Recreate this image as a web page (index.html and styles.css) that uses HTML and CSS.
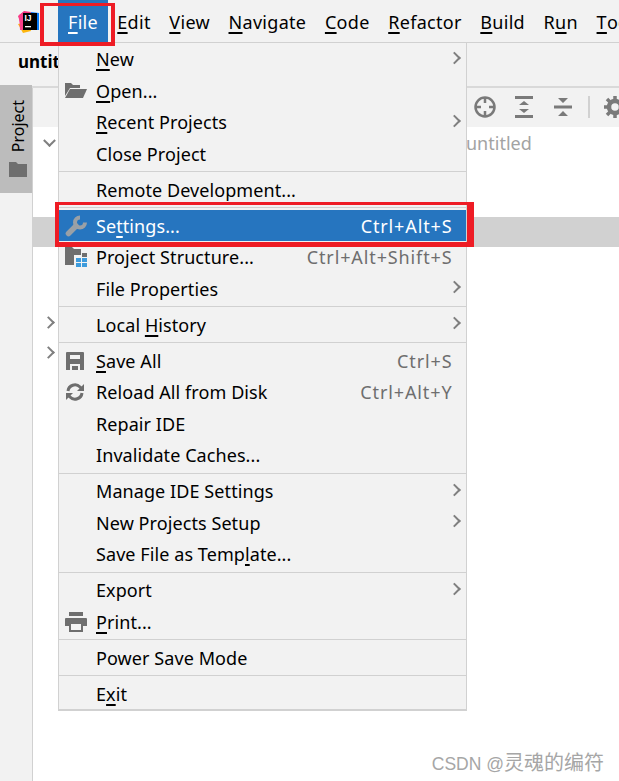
FILE: index.html
```html
<!DOCTYPE html>
<html lang="en">
<head>
<meta charset="utf-8">
<title>File menu</title>
<link rel="stylesheet" href="styles.css">
</head>
<body>
<div class="app">
  <header class="menubar">
    <svg class="logo" width="24" height="24" viewBox="0 0 24 24">
      <path d="M0 6 6 1 13 2 10 14 3 15Z" fill="#f5317f"/>
      <path d="M13 2 21 3 21 20 12 20Z" fill="#087cfa"/>
      <path d="M0 14 5 23 13 21 10 12Z" fill="#fdb60d"/>
      <path d="M1 5 5 3 5 20 2 20Z" fill="#fc3f8a"/>
      <rect x="5" y="3" width="14" height="17" fill="#000"/>
      <text x="6.500" y="11" class="logo-text">IJ</text>
      <rect x="7" y="16" width="6" height="1.300" fill="#fff"/>
    </svg>
    <nav class="menus">
      <span class="menu menu-active"><u>F</u>ile</span>
      <span class="menu"><u>E</u>dit</span>
      <span class="menu"><u>V</u>iew</span>
      <span class="menu"><u>N</u>avigate</span>
      <span class="menu"><u>C</u>ode</span>
      <span class="menu"><u>R</u>efactor</span>
      <span class="menu"><u>B</u>uild</span>
      <span class="menu">R<u>u</u>n</span>
      <span class="menu"><u>T</u>ools</span>
    </nav>
  </header>
  <div class="titlebar"><b>untitled</b></div>
  <div class="workspace">
    <aside class="sidebar">
      <div class="side-tab">
        <span class="side-label">Project</span>
        <svg width="18" height="15" viewBox="0 0 18 15"><path d="M0 0h7l2 2h9v13H0Z" fill="#6e6e6e"/></svg>
      </div>
    </aside>
    <main class="panel">
      <div class="toolbar">
        <svg class="tb-icon" width="24" height="24" viewBox="0 0 24 24" fill="none" stroke="#7a7a7a" stroke-width="2.500"><circle cx="12" cy="12" r="9.500"/><path d="M12 2v6M12 16v6M2 12h6M16 12h6"/></svg>
        <svg class="tb-icon" width="24" height="24" viewBox="0 0 24 24" fill="#7a7a7a"><rect x="3" y="1" width="18" height="3"/><rect x="3" y="20" width="18" height="3"/><path d="M12 6l5 4H7ZM12 18l5-4H7Z"/></svg>
        <svg class="tb-icon" width="24" height="24" viewBox="0 0 24 24" fill="#7a7a7a"><rect x="3" y="10.500" width="18" height="3"/><path d="M7 3h10l-5 5ZM7 21h10l-5-5Z"/></svg>
        <span class="tb-sep"></span>
        <svg class="tb-icon tb-gear" width="22" height="22" viewBox="0 0 22 22"><circle cx="11" cy="11" r="6" fill="none" stroke="#7a7a7a" stroke-width="4.500"/><path d="M11 0v5M11 17v5M0 11h5M17 11h5M3 3l4 4M15 15l4 4M3 19l4-4M15 7l4-4" stroke="#7a7a7a" stroke-width="3.500"/></svg>
      </div>
      <div class="tree">
        <div class="tree-row"><span class="chev-down"></span><span class="tree-path">untitled</span></div>
        <div class="tree-selected"></div>
        <div class="tree-chevs"><span class="chev-right"></span><span class="chev-right"></span></div>
      </div>
    </main>
  </div>

  <div class="dropdown">
    <div class="item"><span class="label"><u>N</u>ew</span><span class="arrow"></span></div>
    <div class="item">
      <svg class="icon" width="22" height="18" viewBox="0 0 22 18" fill="#6e6e6e"><path d="M0 3V1h6l2 2h7v3H5L0 14Z"/><path d="M5 7h17l-4 9H0Z"/></svg>
      <span class="label"><u>O</u>pen...</span>
    </div>
    <div class="item"><span class="label"><u>R</u>ecent Projects</span><span class="arrow"></span></div>
    <div class="item"><span class="label">Close Project</span></div>
    <div class="sep"></div>
    <div class="item"><span class="label">Remote Development...</span></div>
    <div class="sep"></div>
    <div class="item item-active">
      <svg class="icon" width="22" height="22" viewBox="0 0 22 22" fill="none" stroke="#9aa0a6"><path d="M3.500 18.500 11 11" stroke-width="5.500" stroke-linecap="round"/><path d="M15 2.500A5 5 0 1 0 20 7.500" stroke-width="4"/></svg>
      <span class="label">Se<u>t</u>tings...</span><span class="keys">Ctrl+Alt+S</span>
    </div>
    <div class="item">
      <svg class="icon" width="22" height="20" viewBox="0 0 22 20"><path d="M0 0h7l2 2h7v6H9v10H0Z" fill="#6e6e6e"/><g fill="#3d9bdc"><rect x="11" y="11" width="5" height="4"/><rect x="17" y="11" width="5" height="4"/><rect x="11" y="16" width="5" height="4"/><rect x="17" y="16" width="5" height="4"/></g><rect x="17" y="6" width="5" height="4" fill="#6e6e6e"/></svg>
      <span class="label">Project Structure...</span><span class="keys">Ctrl+Alt+Shift+S</span>
    </div>
    <div class="item"><span class="label">File Properties</span><span class="arrow"></span></div>
    <div class="sep"></div>
    <div class="item"><span class="label">Local <u>H</u>istory</span><span class="arrow"></span></div>
    <div class="sep"></div>
    <div class="item">
      <svg class="icon" width="20" height="20" viewBox="0 0 20 20"><path d="M2 1h16a1 1 0 0 1 1 1v17H1V2a1 1 0 0 1 1-1Z" fill="#6e6e6e"/><rect x="5" y="4" width="10" height="4" fill="#f2f2f2"/><rect x="5" y="13" width="10" height="6" fill="#f2f2f2"/><rect x="7" y="15" width="6" height="4" fill="#6e6e6e"/></svg>
      <span class="label"><u>S</u>ave All</span><span class="keys">Ctrl+S</span>
    </div>
    <div class="item">
      <svg class="icon" width="20" height="20" viewBox="0 0 20 20" fill="none" stroke="#6e6e6e" stroke-width="3"><path d="M3 9a7 7 0 0 1 12-4l2 2"/><path d="M17 11a7 7 0 0 1-12 4l-2-2"/><path d="M19 2v7h-7Z" fill="#6e6e6e" stroke="none"/><path d="M1 18v-7h7Z" fill="#6e6e6e" stroke="none"/></svg>
      <span class="label">Reload All from Disk</span><span class="keys">Ctrl+Alt+Y</span>
    </div>
    <div class="item"><span class="label">Repair IDE</span></div>
    <div class="item"><span class="label">Invalidate Caches...</span></div>
    <div class="sep"></div>
    <div class="item"><span class="label">Manage IDE Settings</span><span class="arrow"></span></div>
    <div class="item"><span class="label">New Projects Setup</span><span class="arrow"></span></div>
    <div class="item"><span class="label">Save File as Temp<u>l</u>ate...</span></div>
    <div class="sep"></div>
    <div class="item"><span class="label">Export</span><span class="arrow"></span></div>
    <div class="item">
      <svg class="icon" width="22" height="20" viewBox="0 0 22 20"><rect x="4" y="0" width="14" height="4" fill="#6e6e6e"/><path d="M1 6h20a1 1 0 0 1 1 1v7H0V7a1 1 0 0 1 1-1Z" fill="#6e6e6e"/><rect x="5" y="11" width="12" height="8" fill="#f2f2f2" stroke="#6e6e6e" stroke-width="2"/></svg>
      <span class="label"><u>P</u>rint...</span>
    </div>
    <div class="sep"></div>
    <div class="item"><span class="label">Power Save Mode</span></div>
    <div class="sep"></div>
    <div class="item"><span class="label">E<u>x</u>it</span></div>
  </div>

  <div class="callout callout-file"></div>
  <div class="callout callout-settings"></div>
  <div class="watermark">CSDN @<span class="watermark-cjk">灵魂的编符</span></div>
</div>
</body>
</html>
```

FILE: styles.css
```css
* { box-sizing: border-box; }
html, body { margin: 0; height: 100%; }
body { font-family: "Noto Sans", "Noto Sans CJK SC", sans-serif; font-size: 18px; color: #000; background: #fff; overflow: hidden; }
.app { position: relative; width: 619px; height: 781px; overflow: hidden; display: flex; flex-direction: column; }
u { text-underline-offset: 3px; text-decoration-thickness: 1.500px; }

.menubar { height: 43px; flex: none; display: flex; align-items: stretch; background: #f2f2f2; border-bottom: 1px solid #d1d1d1; padding-left: 18px; white-space: nowrap; overflow: hidden; }
.logo { margin-top: 10px; flex: none; }
.logo-text { font: 700 8.500px "Liberation Sans", sans-serif; fill: #fff; }
.menus { display: flex; margin-left: 16px; }
.menu { display: flex; align-items: center; padding: 2px 9.300px 0; line-height: 1; letter-spacing: 0.300px; }
.menu-active { background: #2675bf; color: #fff; width: 50px; padding: 2px 0 0; justify-content: center; }

.titlebar { height: 45px; flex: none; background: #f2f2f2; padding: 7px 0 0 18px; font-size: 17px; border-bottom: 2px solid #d9d9d9; }

.workspace { flex: 1; display: flex; min-height: 0; }
.sidebar { width: 33px; flex: none; background: #f2f2f2; border-right: 1px solid #d1d1d1; }
.side-tab { height: 108px; width: 32px; margin-top: -3px; position: relative; background: #bcbcbc; display: flex; flex-direction: column; align-items: center; gap: 10px; padding: 15px 0 0 3px; font-size: 16px; }
.side-label { writing-mode: vertical-rl; transform: rotate(180deg); line-height: 20px; }

.panel { flex: 1; min-width: 0; }
.toolbar { height: 39px; background: #f2f2f2; display: flex; align-items: center; padding: 0 0 1px 440px; gap: 15px; }
.tb-icon { flex: none; }
.tb-sep { width: 2px; height: 22px; background: #d1d1d1; flex: none; margin-left: -2px; }
.tb-gear { margin-left: -1px; }

.tree { position: relative; }
.tree-row { height: 32px; display: flex; align-items: center; padding-left: 12px; }
.tree-path { margin-left: 412px; color: #a3a3a3; }
.tree-selected { height: 30px; margin-top: 58px; background: #d1d1d1; }
.tree-chevs { position: absolute; left: 11px; top: 191px; display: flex; flex-direction: column; gap: 21px; }

.chev-down { width: 9px; height: 9px; border-right: 2px solid #7f7f7f; border-bottom: 2px solid #7f7f7f; transform: rotate(45deg) translate(-2px, -2px); }
.chev-right { display: block; width: 9px; height: 9px; border-right: 2px solid #7f7f7f; border-top: 2px solid #7f7f7f; transform: rotate(45deg); }

.dropdown { position: absolute; left: 58px; top: 42px; width: 409px; background: #f2f2f2; border: 1px solid #d1d1d1; border-bottom-width: 2px; padding-top: 0.250px; }
.item { position: relative; height: 31.500px; display: flex; align-items: center; padding: 0 13.500px 0 37px; white-space: nowrap; }
.label { flex: 1; letter-spacing: 0.080px; }
.keys { color: #6e6e6e; letter-spacing: 0.880px; }
.icon { position: absolute; left: 6px; top: 50%; transform: translateY(-50%); }
.arrow { width: 9px; height: 9px; border-right: 2px solid #7f7f7f; border-top: 2px solid #7f7f7f; transform: translateY(-1.500px) rotate(45deg); margin-right: -6px; }
.sep { height: 1px; margin: 1.750px 0; background: #d1d1d1; }
.item-active { background: #2675bf; color: #fff; }
.item-active .keys { color: #fff; }

.callout { position: absolute; border: 3px solid #ee1c25; }
.callout-file { left: 40px; top: 3px; width: 75px; height: 43px; border-width: 3px 4px 4px 4px; }
.callout-settings { left: 55px; top: 202px; width: 419px; height: 45px; border-width: 3px 7px 5px 4px; }

.watermark { position: absolute; right: 15px; top: 747px; font-family: "Liberation Sans", "Noto Sans CJK SC", sans-serif; font-size: 17.500px; color: #a6a6a6; }
.watermark-cjk { font-family: "Noto Sans CJK SC", sans-serif; font-size: 20px; }
```
